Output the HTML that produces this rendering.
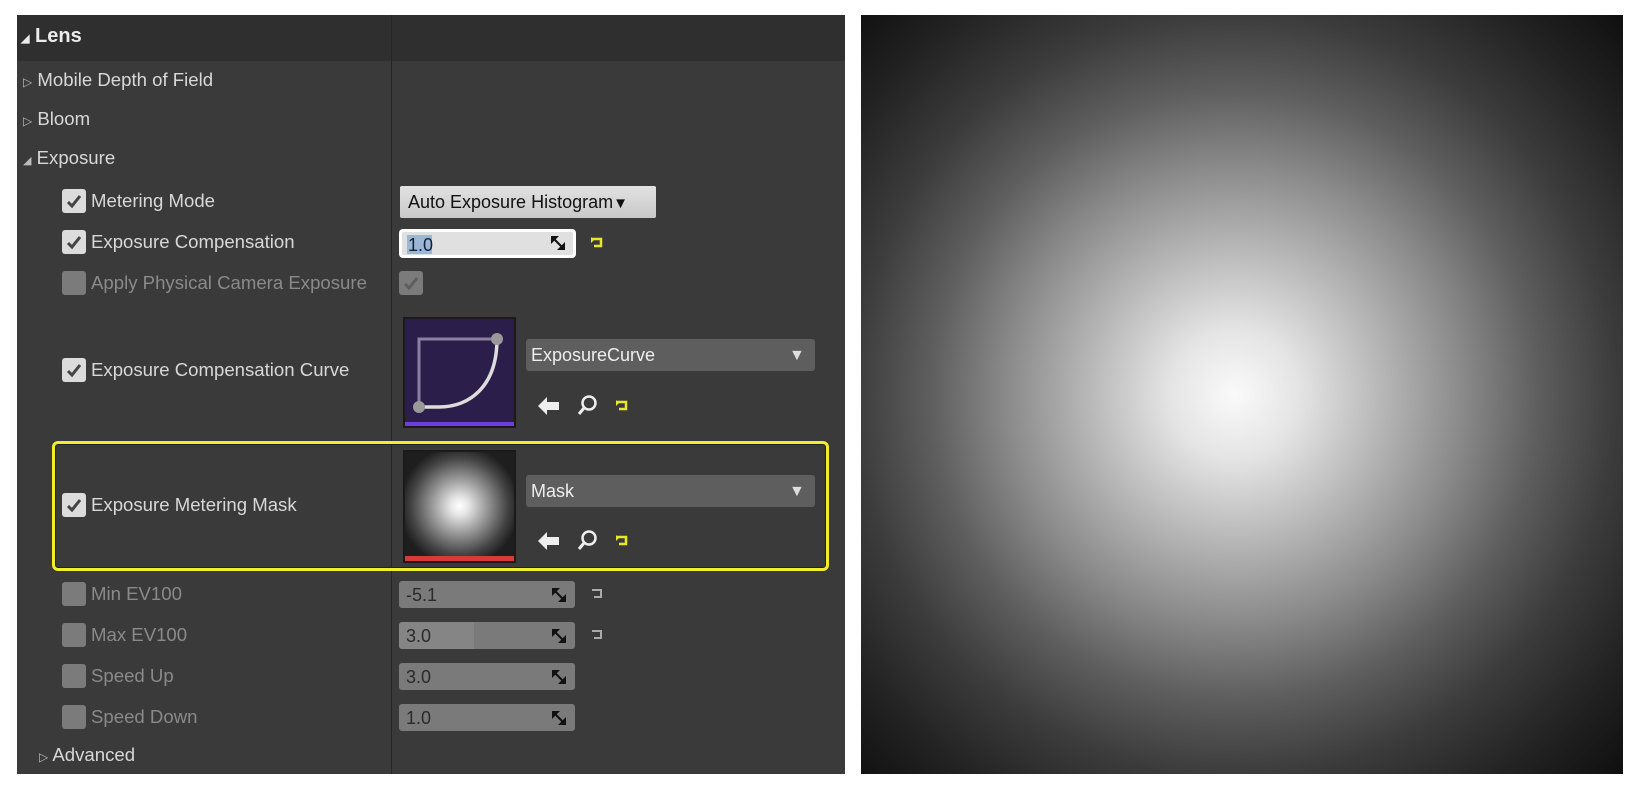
<!DOCTYPE html>
<html><head><meta charset="utf-8">
<style>
*{margin:0;padding:0;box-sizing:border-box}
body{width:1640px;height:787px;background:#fff;position:relative;overflow:hidden;font-family:"Liberation Sans",sans-serif;}
.panel{position:absolute;left:17px;top:15px;width:828px;height:759px;background:#3a3a3a;}
.hdr{position:absolute;left:0;top:0;width:828px;height:46px;background:#2f2f2f;}
.div{position:absolute;left:374px;top:0;width:1px;height:759px;background:#262626;}
.t{position:absolute;color:#d8d8d8;font-size:18.6px;white-space:nowrap;line-height:20px}
.dim{color:#8a8a8a}
.cb{position:absolute;width:24px;height:24px;border-radius:3px;background:#dcdcdc;}
.cb.d{background:#7b7b7b}
.cb svg{position:absolute;left:3px;top:3px}
.num{position:absolute;width:176px;height:27px;border-radius:3px;background:#7a7a7a;}
.num span{position:absolute;left:7px;top:4px;font-size:18px;color:#2a2a2a}
.rs{position:absolute;right:8px;top:6px}
.dd{position:absolute;background:#5e5e5e;border-radius:3px}
.ic{position:absolute}
</style></head><body>
<div class="panel">
<div class="hdr"></div>
<div class="div"></div>
<div class="t" style="left:4px;top:11px;font-size:20px;color:#ececec;font-weight:bold"><span style="font-size:11px">◢</span> Lens</div>
<div class="t" style="left:6px;top:55px"><span style="font-size:12px;color:#bbb">▷</span> Mobile Depth of Field</div>
<div class="t" style="left:6px;top:94px"><span style="font-size:12px;color:#bbb">▷</span> Bloom</div>
<div class="t" style="left:6px;top:133px"><span style="font-size:11px;color:#bbb">◢</span> Exposure</div>
<div class="t" style="left:22px;top:730px"><span style="font-size:12px;color:#bbb">▷</span> Advanced</div>

<div class="cb" style="left:45px;top:174px"><svg width="18" height="18"><path d="M3 10 L7 14 L15 4" stroke="#444" stroke-width="3" fill="none"/></svg></div>
<div class="t" style="left:74px;top:176px">Metering Mode</div>
<div class="cb" style="left:45px;top:215px"><svg width="18" height="18"><path d="M3 10 L7 14 L15 4" stroke="#444" stroke-width="3" fill="none"/></svg></div>
<div class="t" style="left:74px;top:217px">Exposure Compensation</div>
<div class="cb d" style="left:45px;top:256px"></div>
<div class="t dim" style="left:74px;top:258px">Apply Physical Camera Exposure</div>
<div class="cb" style="left:45px;top:343px"><svg width="18" height="18"><path d="M3 10 L7 14 L15 4" stroke="#444" stroke-width="3" fill="none"/></svg></div>
<div class="t" style="left:74px;top:345px">Exposure Compensation Curve</div>
<div class="cb" style="left:45px;top:478px"><svg width="18" height="18"><path d="M3 10 L7 14 L15 4" stroke="#444" stroke-width="3" fill="none"/></svg></div>
<div class="t" style="left:74px;top:480px">Exposure Metering Mask</div>
<div class="cb d" style="left:45px;top:567px"></div>
<div class="t dim" style="left:74px;top:569px">Min EV100</div>
<div class="cb d" style="left:45px;top:608px"></div>
<div class="t dim" style="left:74px;top:610px">Max EV100</div>
<div class="cb d" style="left:45px;top:649px"></div>
<div class="t dim" style="left:74px;top:651px">Speed Up</div>
<div class="cb d" style="left:45px;top:690px"></div>
<div class="t dim" style="left:74px;top:692px">Speed Down</div>

<div style="position:absolute;left:383px;top:171px;width:256px;height:32px;border-radius:2px;background:linear-gradient(#e2e2e2,#c8c8c8);"></div>
<div class="t" style="left:391px;top:177px;color:#111;font-size:18px">Auto Exposure Histogram<span style="font-size:15px">▼</span></div>
<div style="position:absolute;left:382px;top:214px;width:177px;height:29px;border-radius:4px;background:#fff;"></div>
<div style="position:absolute;left:385px;top:217px;width:171px;height:23px;border-radius:2px;background:#e0e0e0;"></div>
<div style="position:absolute;left:390px;top:220px;width:25px;height:19px;background:#9cb6d8"></div>
<div class="t" style="left:391px;top:220px;color:#123;font-size:18px">1.0</div>
<svg class="ic" style="left:533px;top:220px" width="16" height="16"><path d="M1 1h8L1 9z M15 15H7l8-8z" fill="#111"/><path d="M3 3L13 13" stroke="#111" stroke-width="2"/></svg>
<svg class="ic" style="left:573px;top:221px" width="14" height="14"><path d="M2 3h9v7H4" stroke="#e8e82a" stroke-width="2.5" fill="none"/><path d="M1 1l3 3-3 3" fill="#e8e82a"/></svg>
<div class="cb d" style="left:382px;top:256px;"><svg width="18" height="18"><path d="M3 10 L7 14 L15 4" stroke="#5e5e5e" stroke-width="3" fill="none"/></svg></div>

<div style="position:absolute;left:386px;top:302px;width:113px;height:111px;background:#1a1a1a"></div>
<div style="position:absolute;left:388px;top:304px;width:109px;height:103px;background:#2c1e4a"></div>
<div style="position:absolute;left:388px;top:407px;width:109px;height:4px;background:#6a3ee0"></div>
<svg class="ic" style="left:388px;top:304px" width="109" height="103"><path d="M14 88V20h78" stroke="#8a80a0" stroke-width="3" fill="none"/><path d="M14 88h20c30 0 58-20 58-68" stroke="#ddd" stroke-width="3.5" fill="none"/><circle cx="92" cy="20" r="6" fill="#999"/><circle cx="14" cy="88" r="6" fill="#999"/></svg>
<div class="dd" style="left:509px;top:324px;width:289px;height:32px"></div>
<div class="t" style="left:514px;top:330px;font-size:18px;color:#eee">ExposureCurve</div>
<div class="t" style="left:772px;top:331px;font-size:16px;color:#ddd">▼</div>
<svg class="ic" style="left:520px;top:381px" width="24" height="20"><path d="M10 1L1 10l9 9v-5h12V6H10z" fill="#eee"/></svg>
<svg class="ic" style="left:560px;top:379px" width="22" height="22"><circle cx="12" cy="9" r="6.5" stroke="#eee" stroke-width="2.5" fill="none"/><path d="M7 14L2 20" stroke="#eee" stroke-width="3"/></svg>
<svg class="ic" style="left:598px;top:384px" width="14" height="14"><path d="M2 3h9v7H4" stroke="#e8e82a" stroke-width="2.5" fill="none"/><path d="M1 1l3 3-3 3" fill="#e8e82a"/></svg>

<div style="position:absolute;left:35px;top:426px;width:777px;height:130px;border:3px solid #f2ee2a;border-radius:6px;box-shadow:0 0 0 1px #222 inset"></div>
<div style="position:absolute;left:386px;top:435px;width:113px;height:113px;background:#1a1a1a"></div>
<div style="position:absolute;left:388px;top:437px;width:109px;height:104px;background:radial-gradient(ellipse 55% 58% at 50% 52%,#fff 0%,#e6e6e6 15%,#9a9a9a 45%,#444 80%,#1e1e1e 100%)"></div>
<div style="position:absolute;left:388px;top:541px;width:109px;height:5px;background:#d8393a"></div>
<div class="dd" style="left:509px;top:460px;width:289px;height:32px"></div>
<div class="t" style="left:514px;top:466px;font-size:18px;color:#eee">Mask</div>
<div class="t" style="left:772px;top:467px;font-size:16px;color:#ddd">▼</div>
<svg class="ic" style="left:520px;top:516px" width="24" height="20"><path d="M10 1L1 10l9 9v-5h12V6H10z" fill="#eee"/></svg>
<svg class="ic" style="left:560px;top:514px" width="22" height="22"><circle cx="12" cy="9" r="6.5" stroke="#eee" stroke-width="2.5" fill="none"/><path d="M7 14L2 20" stroke="#eee" stroke-width="3"/></svg>
<svg class="ic" style="left:598px;top:519px" width="14" height="14"><path d="M2 3h9v7H4" stroke="#e8e82a" stroke-width="2.5" fill="none"/><path d="M1 1l3 3-3 3" fill="#e8e82a"/></svg>

<div class="num" style="left:382px;top:566px"><span>-5.1</span><svg class="rs" width="16" height="16"><path d="M1 1h8L1 9z M15 15H7l8-8z" fill="#111"/><path d="M3 3L13 13" stroke="#111" stroke-width="2"/></svg></div>
<svg class="ic" style="left:573px;top:572px" width="14" height="14"><path d="M2 3h9v7H4" stroke="#aaa" stroke-width="2" fill="none"/></svg>
<div class="num" style="left:382px;top:607px"><div style="position:absolute;left:0;top:0;width:75px;height:27px;background:#858585;border-radius:3px 0 0 3px"></div><span>3.0</span><svg class="rs" width="16" height="16"><path d="M1 1h8L1 9z M15 15H7l8-8z" fill="#111"/><path d="M3 3L13 13" stroke="#111" stroke-width="2"/></svg></div>
<svg class="ic" style="left:573px;top:613px" width="14" height="14"><path d="M2 3h9v7H4" stroke="#aaa" stroke-width="2" fill="none"/></svg>
<div class="num" style="left:382px;top:648px"><span>3.0</span><svg class="rs" width="16" height="16"><path d="M1 1h8L1 9z M15 15H7l8-8z" fill="#111"/><path d="M3 3L13 13" stroke="#111" stroke-width="2"/></svg></div>
<div class="num" style="left:382px;top:689px"><span>1.0</span><svg class="rs" width="16" height="16"><path d="M1 1h8L1 9z M15 15H7l8-8z" fill="#111"/><path d="M3 3L13 13" stroke="#111" stroke-width="2"/></svg></div>
</div>

<div style="position:absolute;left:861px;top:15px;width:762px;height:759px;background:radial-gradient(circle farthest-corner at 49% 50%,#fafafa 0%,#e4e4e4 12%,#b4b4b4 28%,#8a8a8a 42%,#5e5e5e 56%,#3c3c3c 70%,#232323 85%,#0f0f0f 100%)"></div>
</body></html>
